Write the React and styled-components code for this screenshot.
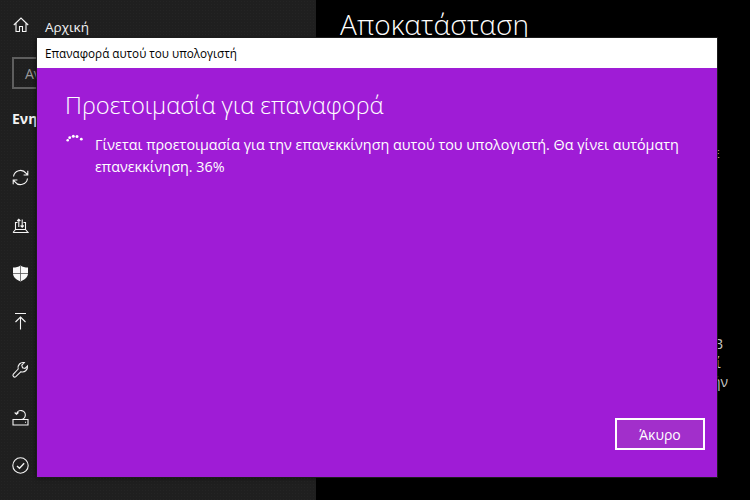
import React from "react";
import styled, { createGlobalStyle } from "styled-components";

const Global = createGlobalStyle`
  html, body { margin: 0; padding: 0; background: #000; }
  body { font-family: "Open Sans", "Noto Sans", "Liberation Sans", sans-serif; }
`;

const Desktop = styled.div`
  position: relative;
  width: 750px;
  height: 500px;
  overflow: hidden;
  display: flex;
  background: #000;
`;

const Sidebar = styled.aside`
  width: 316px;
  flex: none;
  box-sizing: border-box;
  padding-top: 14px;
  background-color: #1f1f1f;
  background-image: radial-gradient(rgba(255, 255, 255, 0.025) 0.6px, transparent 0.8px);
  background-size: 3px 3px;
  color: #fff;
`;

const HomeRow = styled.div`
  display: flex;
  align-items: center;
  height: 26px;
  padding-left: 13px;
  gap: 16px;
  font-size: 13.500px;
  color: #f2f2f2;
`;

const HomeIcon = styled.svg`
  width: 16px;
  height: 16px;
  flex: none;
  margin-top: -5px;
  fill: none;
  stroke: #f4f4f4;
  stroke-width: 1.100;
`;

const Search = styled.div`
  box-sizing: border-box;
  width: 288px;
  height: 32px;
  margin: 17px 0 0 12px;
  padding-left: 11px;
  border: 2px solid #5e5e5e;
  display: flex;
  align-items: center;
  font-size: 14px;
  color: #9a9a9a;
`;

const Section = styled.div`
  margin: 20px 0 0 12px;
  font-size: 14px;
  font-weight: 700;
  line-height: 20px;
  color: #f2f2f2;
`;

const Nav = styled.nav`
  display: flex;
  flex-direction: column;
  margin-top: 24px;
  padding-left: 12px;
`;

const NavItem = styled.div`
  height: 48px;
  display: flex;
  align-items: center;
`;

const NavIcon = styled.svg`
  display: block;
  width: 17px;
  height: 17px;
  overflow: visible;
  fill: none;
  stroke: #f4f4f4;
  stroke-width: 1.100;
`;

const Main = styled.main`
  flex: 1;
  padding: 5px 0 0 24px;
  color: #fff;
  position: relative;
`;

const PageTitle = styled.h1`
  margin: 0;
  font-size: 28px;
  line-height: 38px;
  font-weight: 300;
  letter-spacing: 0.100px;
`;

const Tick = styled.div`
  margin: 105px 0 0 374px;
  font-size: 10px;
  line-height: 12px;
  color: #c8c8c8;
`;

const Fragments = styled.div`
  margin-top: 174px;
`;

const Fragment = styled.div`
  margin-left: ${(p) => p.$offset}px;
  font-size: 14px;
  line-height: 19px;
  color: #c8c8c8;
  white-space: nowrap;
`;

const Dialog = styled.section`
  position: absolute;
  left: 37px;
  top: 38px;
  width: 680px;
  height: 439px;
  display: flex;
  flex-direction: column;
  background: #9f1cd6;
  box-shadow: 0 0 0 1px rgba(30, 30, 30, 0.9), -1px 1px 4px rgba(0, 0, 0, 0.6);
`;

const TitleBar = styled.header`
  height: 30px;
  flex: none;
  display: flex;
  align-items: center;
  padding-left: 8px;
  background: #fff;
  color: #000;
  font-size: 11.700px;
`;

const Body = styled.div`
  flex: 1;
  display: flex;
  flex-direction: column;
  padding: 22px 12px 27px 28px;
  color: #fff;
`;

const Heading = styled.h2`
  margin: 0;
  font-size: 23.700px;
  line-height: 30px;
  font-weight: 300;
`;

const Progress = styled.div`
  display: flex;
  gap: 12px;
  margin-top: 14px;
`;

const Spinner = styled.svg`
  width: 18px;
  height: 18px;
  flex: none;
  fill: #fff;
`;

const Message = styled.p`
  margin: 0;
  width: 610px;
  font-size: 14.370px;
  line-height: 21.500px;
`;

const Footer = styled.div`
  margin-top: auto;
  display: flex;
  justify-content: flex-end;
`;

const Cancel = styled.button`
  box-sizing: border-box;
  width: 90px;
  height: 32px;
  border: 2px solid #fff;
  background: #a22fcb;
  color: #fff;
  font: inherit;
  font-size: 14px;
  padding: 0;
`;

const icons = [
  <>
    <path d="M1.500 7.500A7 7 0 0 1 14 4.200L15.800 6M15.800 1.800V6H11.600" />
    <path d="M15.500 9.500A7 7 0 0 1 3 12.800L1.200 11M1.200 15.200V11H5.400" />
  </>,
  <>
    <path d="M5.500 5.500H3.500V12.500H13.500V5.500H11.500M1 15.500H16L13.500 12.500M1 15.500L3.500 12.500" />
    <path d="M6.800 10V2.500M5.200 4L6.800 2.300 8.400 4M10.200 2.500V10M8.600 8.500L10.200 10.200 11.800 8.500" />
  </>,
  <>
    <path d="M8.500 .5C10.500 1.900 13 2.500 16 2.500V8.500C16 12 12.500 15 8.500 16.500 4.500 15 1 12 1 8.500V2.500C4 2.500 6.500 1.900 8.500 .5Z" fill="#f8f8f8" stroke="none" />
    <path d="M8.500 .5V16.500M1 8.500H16" stroke="#555" strokeWidth="0.800" />
  </>,
  <path d="M3 .5H14M8.500 16.500V4M3.500 9L8.500 4 13.500 9" />,
  <path d="M6.200 8L1.400 13.200A1.700 1.700 0 0 0 3.800 15.600L9 10.700C12.500 11.800 16 9 15.500 5L13 7.500 10.500 6.800 9.800 4.200 12.300 1.600C8.500 .8 5.300 4 6.200 8Z" />,
  <>
    <path d="M1 10.500H16V16H1Z" />
    <path d="M4.500 4.800A4.500 4.500 0 1 1 8.500 10.500M2.700 3.500L4.500 5.300 6.500 3.500" />
    <path d="M13 13.200H14" />
  </>,
  <>
    <circle cx="8.500" cy="8.500" r="7.700" />
    <path d="M5 9L7.500 11.300 12.200 6.200" strokeWidth="1.300" />
  </>,
];

export default function App() {
  return (
    <Desktop>
      <Global />
      <Sidebar>
        <HomeRow>
          <HomeIcon viewBox="0 0 16 16">
            <path d="M.8 8L8 1 15.200 8M3 6V14.500H6.500V9.500H9.500V14.500H13V6" />
          </HomeIcon>
          <span>Αρχική</span>
        </HomeRow>
        <Search>Αναζήτηση</Search>
        <Section>Ενημέρωση και ασφάλεια</Section>
        <Nav>
          {icons.map((icon, i) => (
            <NavItem key={i}>
              <NavIcon viewBox="0 0 17 17">{icon}</NavIcon>
            </NavItem>
          ))}
        </Nav>
      </Sidebar>
      <Main>
        <PageTitle>Αποκατάσταση</PageTitle>
        <Tick>Ξ</Tick>
        <Fragments>
          <Fragment $offset={374}>B</Fragment>
          <Fragment $offset={376}>ί</Fragment>
          <Fragment $offset={372}>ήν</Fragment>
        </Fragments>
      </Main>
      <Dialog>
        <TitleBar>Επαναφορά αυτού του υπολογιστή</TitleBar>
        <Body>
          <Heading>Προετοιμασία για επαναφορά</Heading>
          <Progress>
            <Spinner viewBox="0 0 18 18">
              <circle cx="2.700" cy="6.300" r="1.300" />
              <circle cx="4.700" cy="3.700" r="1.400" />
              <circle cx="8.300" cy="2.200" r="1.500" />
              <circle cx="12" cy="2.500" r="1.500" />
              <circle cx="16.300" cy="5.200" r="1.400" />
            </Spinner>
            <Message>
              Γίνεται προετοιμασία για την επανεκκίνηση αυτού του υπολογιστή. Θα γίνει αυτόματη
              επανεκκίνηση. 36%
            </Message>
          </Progress>
          <Footer>
            <Cancel>Άκυρο</Cancel>
          </Footer>
        </Body>
      </Dialog>
    </Desktop>
  );
}
